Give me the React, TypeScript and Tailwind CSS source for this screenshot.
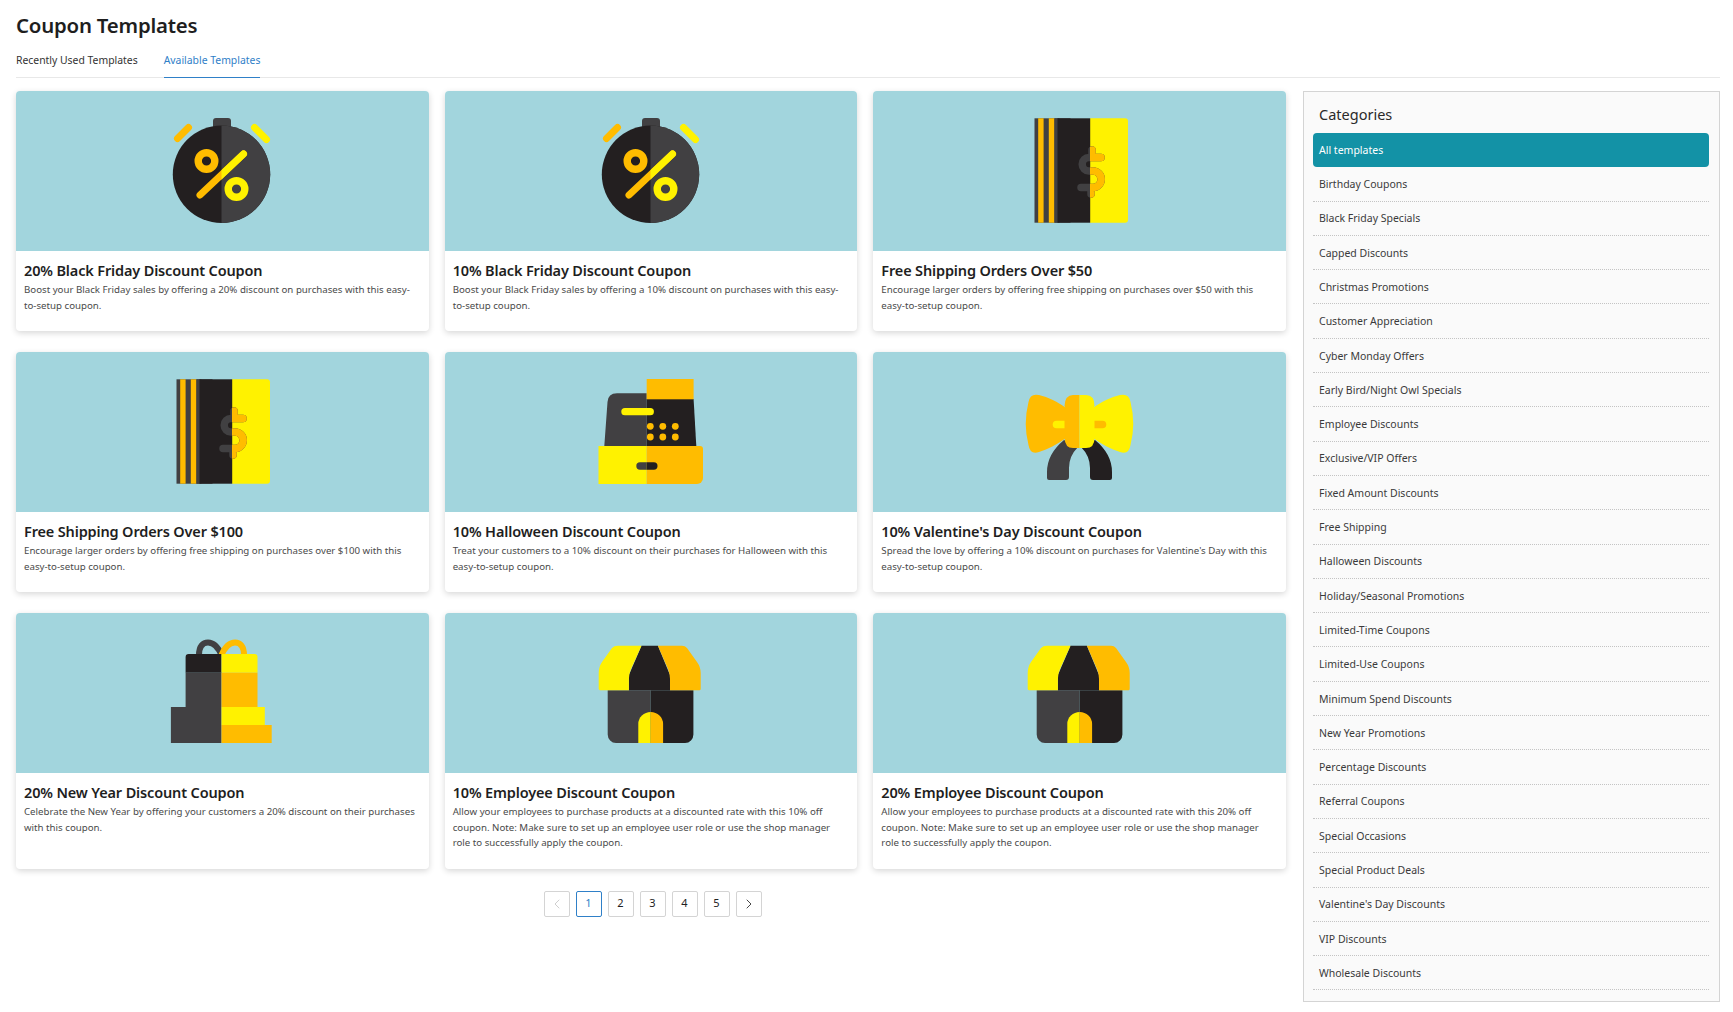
import { ChevronLeft, ChevronRight } from "lucide-react"

const DARK = "#231f20"
const GREY = "#414042"
const AMBER = "#ffbc00"
const YELLOW = "#fff200"

function Stopwatch({ uid }: { uid: string }) {
  return (
    <svg viewBox="0 0 120 120" className="w-[120px] h-[120px]">
      <defs>
        <clipPath id={uid}>
          <rect x="59.5" y="0" width="61" height="120" />
        </clipPath>
      </defs>
      <rect x="51" y="7" width="18" height="14" rx="3" fill={GREY} />
      <path d="M15.5 27.5 L26.5 16.5" stroke={AMBER} strokeWidth="7" strokeLinecap="round" />
      <path d="M92.5 16.5 L104.5 28.5" stroke={YELLOW} strokeWidth="7" strokeLinecap="round" />
      <circle cx="59.5" cy="63.3" r="48.7" fill={DARK} />
      <circle cx="59.5" cy="63.3" r="48.7" fill={GREY} clipPath={`url(#${uid})`} />
      <circle cx="44.5" cy="50" r="8.3" fill="none" stroke={AMBER} strokeWidth="7.4" />
      <circle cx="74.5" cy="78" r="8.3" fill="none" stroke={YELLOW} strokeWidth="7.4" />
      <path d="M38 84 L81.5 43" stroke={AMBER} strokeWidth="7" strokeLinecap="round" />
      <path d="M38 84 L81.5 43" stroke={YELLOW} strokeWidth="7" strokeLinecap="round" clipPath={`url(#${uid})`} />
    </svg>
  )
}

function ShippingCard({ uid }: { uid: string }) {
  const dollar = "M81 46.5 H69 a6.8 6.8 0 0 0 0 13.6 H73 a8.2 8.2 0 0 1 0 16.4 H61 M72 39 V46 M71 77 V83"
  return (
    <svg viewBox="0 0 120 120" className="w-[120px] h-[120px]">
      <defs>
        <clipPath id={uid}>
          <rect x="70" y="0" width="50" height="120" />
        </clipPath>
      </defs>
      <rect x="14.5" y="7.3" width="36" height="104.4" fill={GREY} />
      <rect x="18.2" y="7.3" width="5.4" height="104.4" fill={AMBER} />
      <rect x="28.8" y="7.3" width="5.6" height="104.4" fill={AMBER} />
      <rect x="34.4" y="7.3" width="5" height="104.4" fill={GREY} />
      <path d="M70 7.3 H105 a3 3 0 0 1 3 3 V108.7 a3 3 0 0 1 -3 3 H70 Z" fill={YELLOW} />
      <rect x="37.5" y="7.3" width="32.7" height="104.4" fill={DARK} />
      <path d={dollar} fill="none" stroke={GREY} strokeWidth="7.5" strokeLinecap="round" />
      <path d={dollar} fill="none" stroke={AMBER} strokeWidth="7.5" strokeLinecap="round" clipPath={`url(#${uid})`} />
    </svg>
  )
}

function Register() {
  return (
    <svg viewBox="0 0 120 120" className="w-[120px] h-[120px]">
      <path d="M13.3 74 L16.5 30 Q17 21.3 26 21.3 H55.7 V74 Z" fill={GREY} />
      <path d="M55.7 27 H102.6 L105.3 74 H55.7 Z" fill={DARK} />
      <rect x="55.7" y="7" width="46.9" height="20.3" fill={AMBER} />
      <path d="M7.5 74 H55.7 V112 H7.5 Z" fill={YELLOW} />
      <path d="M55.7 74 H109 a3 3 0 0 1 3 3 V106 a6 6 0 0 1 -6 6 H55.7 Z" fill={AMBER} />
      <path d="M55.7 90.3 H49 a3.7 3.7 0 0 0 0 7.4 H55.7 Z" fill={GREY} />
      <path d="M55.7 90.3 H62.8 a3.7 3.7 0 0 1 0 7.4 H55.7 Z" fill={DARK} />
      <rect x="30.3" y="36" width="32.6" height="7.3" rx="3.6" fill={YELLOW} />
      {[59.3, 71.8, 84.3].map((x) =>
        [54.3, 65].map((y) => <circle key={`${x}-${y}`} cx={x} cy={y} r="3.4" fill={AMBER} />),
      )}
    </svg>
  )
}

function Bow() {
  return (
    <svg viewBox="0 0 120 120" className="w-[120px] h-[120px]">
      <path d="M29 108 H46 Q49 108 49 105 V96 Q49 84 58 75 L44 68 Q27 82 27 100 V106 Q27 108 29 108 Z" fill={GREY} />
      <path d="M90 108 H73 Q70 108 70 105 V96 Q70 84 61 75 L75 68 Q92 82 92 100 V106 Q92 108 90 108 Z" fill={DARK} />
      <path d="M46 36 C38 30 28 25 19 23 Q10 21 8.5 30 Q3 52 8.5 73 Q10 83 19 80 C28 77 38 72 46 66 Z" fill={AMBER} />
      <path d="M73 36 C81 30 91 25 100 23 Q109 21 110.5 30 Q116 52 110.5 73 Q109 83 100 80 C91 77 81 72 73 66 Z" fill={YELLOW} />
      <path d="M59.5 23 H53 Q45 23 44.5 34 L46 38 V62 L44.5 66 Q45 76 53 76 H59.5 Z" fill={AMBER} />
      <path d="M59.5 23 H66 Q74.5 23 74.5 34 L73 38 V62 L74.5 66 Q74.5 76 66 76 H59.5 Z" fill={YELLOW} />
      <path d="M44.5 48.7 H36.5 a3.8 3.8 0 0 0 0 7.6 H44.5 Z" fill={YELLOW} />
      <path d="M74.5 48.7 H82.5 a3.8 3.8 0 0 1 0 7.6 H74.5 Z" fill={AMBER} />
    </svg>
  )
}

function Gift() {
  return (
    <svg viewBox="0 0 120 120" className="w-[120px] h-[120px]">
      <path d="M37 22 C37 13 41 9.5 46 9.5 C52 9.5 56 14 59.5 22" fill="none" stroke={GREY} strokeWidth="6" />
      <path d="M82 22 C82 13 78 9.5 73 9.5 C67 9.5 63 14 59.5 22" fill="none" stroke={AMBER} strokeWidth="6" />
      <path d="M23.6 39.7 V24 a3 3 0 0 1 3 -3 H59.5 V39.7 Z" fill={DARK} />
      <path d="M59.5 21 H92.5 a3 3 0 0 1 3 3 V39.7 H59.5 Z" fill={YELLOW} />
      <rect x="23.6" y="39.7" width="35.9" height="34.3" fill={GREY} />
      <rect x="59.5" y="39.7" width="36" height="34.3" fill={AMBER} />
      <rect x="8.9" y="74" width="50.6" height="36" fill={GREY} />
      <rect x="59.5" y="74" width="43.3" height="18" fill={YELLOW} />
      <rect x="59.5" y="92" width="50.2" height="18" fill={AMBER} />
    </svg>
  )
}

function Store() {
  return (
    <svg viewBox="0 0 120 120" className="w-[120px] h-[120px]">
      <path d="M16.7 57.3 H59.5 V110 H25 a8.5 8.5 0 0 1 -8.3 -8.5 Z" fill={GREY} />
      <path d="M59.5 57.3 H102.4 V101.5 a8.5 8.5 0 0 1 -8.3 8.5 H59.5 Z" fill={DARK} />
      <path d="M50.5 12.7 H66.9 L79 42 V57.3 H37.9 V42 Z" fill={DARK} />
      <path d="M27 12.7 H50.5 L40 36 Q37.9 41 37.9 46 V57.3 H9 a1.5 1.5 0 0 1 -1.3 -1.5 V40 Q7.7 34 11 29 L21 15 Q23 12.7 27 12.7 Z" fill={YELLOW} />
      <path d="M91 12.7 H66.9 L77 36 Q79 41 79 46 V57.3 H108 a1.5 1.5 0 0 0 1.7 -1.5 V40 Q109.7 34 106 29 L96 15 Q94 12.7 91 12.7 Z" fill={AMBER} />
      <path d="M47.3 110 V91 a12.4 12 0 0 1 12.4 -12 V110 Z" fill={YELLOW} />
      <path d="M59.7 79 a12.4 12 0 0 1 12.4 12 V110 H59.7 Z" fill={AMBER} />
    </svg>
  )
}

const templates = [
  {
    icon: <Stopwatch uid="watch-a" />,
    title: "20% Black Friday Discount Coupon",
    text: "Boost your Black Friday sales by offering a 20% discount on purchases with this easy-to-setup coupon.",
  },
  {
    icon: <Stopwatch uid="watch-b" />,
    title: "10% Black Friday Discount Coupon",
    text: "Boost your Black Friday sales by offering a 10% discount on purchases with this easy-to-setup coupon.",
  },
  {
    icon: <ShippingCard uid="ship-a" />,
    title: "Free Shipping Orders Over $50",
    text: "Encourage larger orders by offering free shipping on purchases over $50 with this easy-to-setup coupon.",
  },
  {
    icon: <ShippingCard uid="ship-b" />,
    title: "Free Shipping Orders Over $100",
    text: "Encourage larger orders by offering free shipping on purchases over $100 with this easy-to-setup coupon.",
  },
  {
    icon: <Register />,
    title: "10% Halloween Discount Coupon",
    text: "Treat your customers to a 10% discount on their purchases for Halloween with this easy-to-setup coupon.",
  },
  {
    icon: <Bow />,
    title: "10% Valentine's Day Discount Coupon",
    text: "Spread the love by offering a 10% discount on purchases for Valentine's Day with this easy-to-setup coupon.",
  },
  {
    icon: <Gift />,
    title: "20% New Year Discount Coupon",
    text: "Celebrate the New Year by offering your customers a 20% discount on their purchases with this coupon.",
  },
  {
    icon: <Store />,
    title: "10% Employee Discount Coupon",
    text: "Allow your employees to purchase products at a discounted rate with this 10% off coupon. Note: Make sure to set up an employee user role or use the shop manager role to successfully apply the coupon.",
  },
  {
    icon: <Store />,
    title: "20% Employee Discount Coupon",
    text: "Allow your employees to purchase products at a discounted rate with this 20% off coupon. Note: Make sure to set up an employee user role or use the shop manager role to successfully apply the coupon.",
  },
]

const categories = [
  "Birthday Coupons",
  "Black Friday Specials",
  "Capped Discounts",
  "Christmas Promotions",
  "Customer Appreciation",
  "Cyber Monday Offers",
  "Early Bird/Night Owl Specials",
  "Employee Discounts",
  "Exclusive/VIP Offers",
  "Fixed Amount Discounts",
  "Free Shipping",
  "Halloween Discounts",
  "Holiday/Seasonal Promotions",
  "Limited-Time Coupons",
  "Limited-Use Coupons",
  "Minimum Spend Discounts",
  "New Year Promotions",
  "Percentage Discounts",
  "Referral Coupons",
  "Special Occasions",
  "Special Product Deals",
  "Valentine's Day Discounts",
  "VIP Discounts",
  "Wholesale Discounts",
]

function Pagination() {
  return (
    <div className="flex justify-center gap-1.5 mt-[22px] pl-[3px]">
      <div className="w-[26px] h-[26px] border border-[#d4d4d4] rounded-[2px] flex items-center justify-center text-[#c4c4c4]">
        <ChevronLeft size={16} strokeWidth={1.25} />
      </div>
      {[1, 2, 3, 4, 5].map((n) => (
        <div
          key={n}
          className={`w-[26px] h-[26px] border rounded-[2px] flex items-center justify-center text-[11px] ${
            n === 1 ? "border-[#2f80c8] text-[#2f80c8]" : "border-[#d4d4d4] text-[#222]"
          }`}
        >
          {n}
        </div>
      ))}
      <div className="w-[26px] h-[26px] border border-[#d4d4d4] rounded-[2px] flex items-center justify-center text-[#222]">
        <ChevronRight size={16} strokeWidth={1.25} />
      </div>
    </div>
  )
}

export default function App() {
  return (
    <div className="w-[1733px] h-[1012px] overflow-hidden bg-white pl-4 pr-[13px] pt-3 font-['Noto_Sans',sans-serif]">
      <h1 className="text-[20.4px] leading-[26px] font-semibold text-[#1e1e1e] tracking-[-0.2px]">Coupon Templates</h1>

      <div className="flex gap-[26px] mt-[9px] h-[31px] border-b border-[#e8e8e8] text-[10.4px] leading-4">
        <div className="pt-[5px] text-[#333]">Recently Used Templates</div>
        <div className="h-[31px] pt-[5px] text-[#2f80c8] border-b border-[#2f80c8]">Available Templates</div>
      </div>

      <div className="flex items-start gap-[17px] mt-[13px]">
        <div className="w-[1270px]">
          <div className="grid grid-cols-3 gap-x-4 gap-y-[21px]">
            {templates.map((t) => (
              <div key={t.title} className="bg-white rounded-[4px] shadow-[0_2px_6px_rgba(0,0,0,0.16)] overflow-hidden">
                <div className="h-40 bg-[#a2d5dd] flex items-center justify-center">{t.icon}</div>
                <div className="px-2 pt-[9px] pb-[18px]">
                  <h3 className="text-[14.5px] leading-5 font-semibold text-[#1e1e1e] tracking-[-0.15px]">{t.title}</h3>
                  <p className="mt-0.5 text-[9.7px] leading-[15.5px] text-[#4a4a4a]">{t.text}</p>
                </div>
              </div>
            ))}
          </div>
          <Pagination />
        </div>

        <aside className="w-[417px] h-[911px] border border-[#d4d4d4] bg-[#fafafa] pl-[9px] pr-2.5">
          <h2 className="h-[41px] pl-1.5 pt-3 text-[14.5px] leading-5 text-[#2a2a2a]">Categories</h2>
          <div className="h-[34.3px] pt-0.5 rounded-[4px] bg-[#1392a6] flex items-center px-1.5 text-[10.5px] text-white">
            All templates
          </div>
          {categories.map((c) => (
            <div
              key={c}
              className="h-[34.3px] pt-0.5 border-b border-dotted border-[#c4c4c4] flex items-center px-1.5 text-[10.5px] text-[#3a3a3a]"
            >
              {c}
            </div>
          ))}
        </aside>
      </div>
    </div>
  )
}
